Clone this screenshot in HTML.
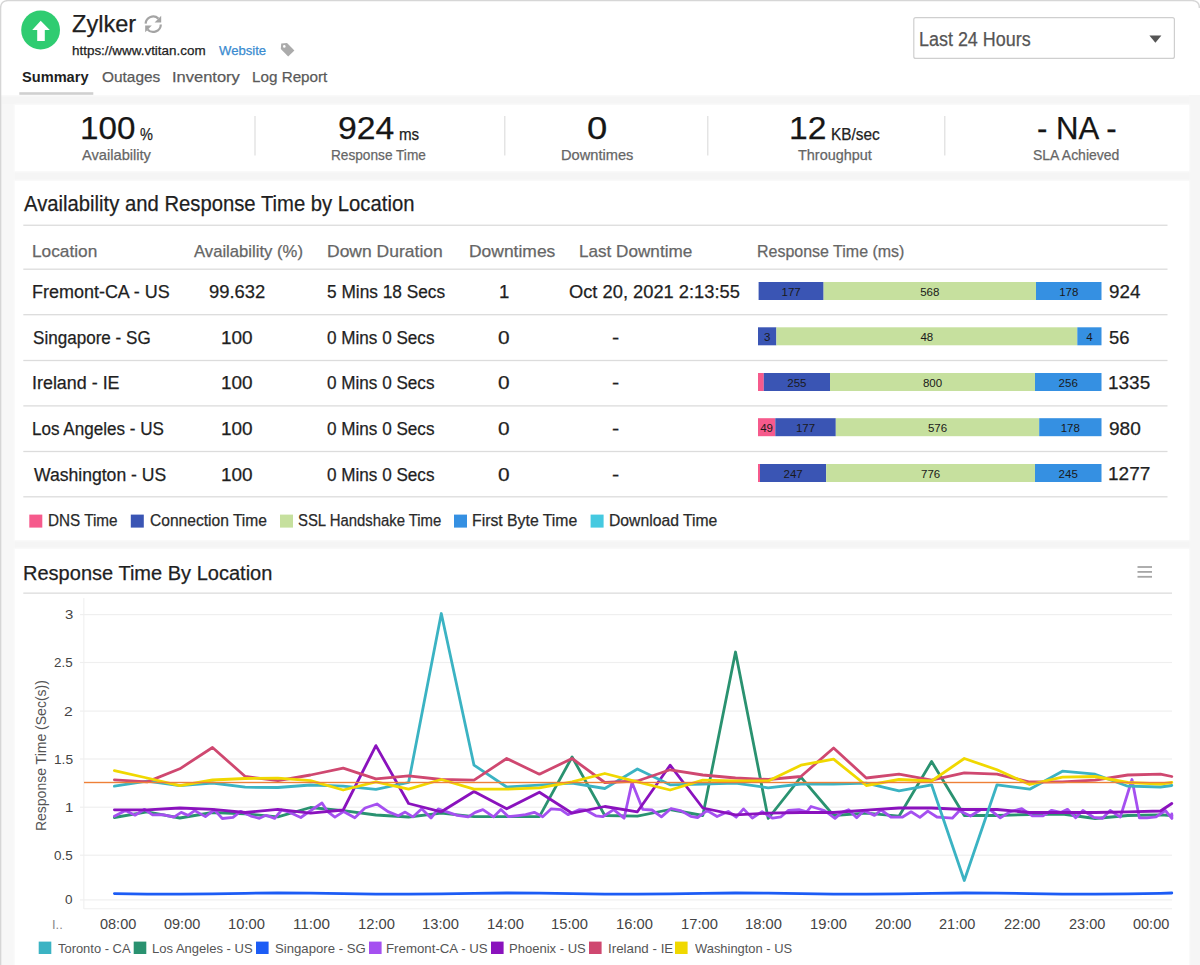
<!DOCTYPE html>
<html><head><meta charset="utf-8"><title>Zylker</title>
<style>
html,body{margin:0;padding:0;}
body{width:1200px;height:965px;overflow:hidden;position:relative;background:#f5f5f5;font-family:"Liberation Sans",sans-serif;}
.card{position:absolute;background:#fff;box-shadow:0 0 2px 1px rgba(255,255,255,0.6);}
.t{position:absolute;white-space:nowrap;line-height:1;transform-origin:0 0;-webkit-text-stroke:0.25px currentColor;}
svg{position:absolute;left:0;top:0;font-family:"Liberation Sans",sans-serif;}
</style></head><body>
<div class="card" style="left:0;top:0;width:1200px;height:95px;"></div>
<div style="position:absolute;left:1.6px;top:104px;width:13px;height:861px;background:#f7f7f7;"></div>
<div style="position:absolute;left:1188.5px;top:95px;width:11.5px;height:870px;background:#f6f6f6;"></div>
<div class="card" style="left:14.5px;top:104.5px;width:1174.5px;height:66.5px;"></div>
<div class="card" style="left:14.5px;top:181px;width:1174.5px;height:359px;"></div>
<div class="card" style="left:14.5px;top:548.5px;width:1174.5px;height:420px;"></div>
<svg width="1200" height="965" viewBox="0 0 1200 965">
<path d="M0.6,965 L0.6,8 Q0.6,0.6 8,0.6 L1192,0.6 Q1199.4,0.6 1199.4,8" fill="none" stroke="#d6d6d6" stroke-width="1.4"/>

<circle cx="40.6" cy="30" r="19.4" fill="#2fcc71"/>
<path d="M40.7,20.8 L49.8,30 L44.8,30 L44.8,41 L37.2,41 L37.2,30 L32.2,30 Z" fill="#fff"/>
<g fill="none" stroke="#a4a4a4" stroke-width="2.2"><path d="M145.6,23.6 A7.6,7.6 0 0 1 158.4,18.6"/><path d="M160.8,24.4 A7.6,7.6 0 0 1 147.6,29.4"/></g>
<path d="M161.2,15.8 L161.2,22.6 L154.6,22.6 Z" fill="#a4a4a4"/>
<path d="M145.2,32.2 L145.2,25.4 L151.8,25.4 Z" fill="#a4a4a4"/>
<path d="M281.2,43.6 L287,43 L294.4,50.4 L288.2,56.4 L280.8,49 Z" fill="#ababab"/>
<circle cx="284.3" cy="46.4" r="1.3" fill="#fff"/>
<rect x="19.3" y="92.2" width="74" height="2.6" fill="#d0d0d0"/>
<rect x="913.8" y="17.6" width="260.6" height="40.8" rx="2" fill="#fff" stroke="#cfcfcf" stroke-width="1.2"/>
<path d="M1149.4,35.6 L1161.4,35.6 L1155.4,42.8 Z" fill="#555"/>
<rect x="254.4" y="116" width="1.2" height="39.5" fill="#dedede"/>
<rect x="504.2" y="116" width="1.2" height="39.5" fill="#dedede"/>
<rect x="707.2" y="116" width="1.2" height="39.5" fill="#dedede"/>
<rect x="944.2" y="116" width="1.2" height="39.5" fill="#dedede"/>
<rect x="23.3" y="224.6" width="1144.2" height="1.3" fill="#dcdcdc"/>
<rect x="23.3" y="268.55" width="1144.2" height="1.3" fill="#dcdcdc"/>
<rect x="23.3" y="314.05" width="1144.2" height="1.3" fill="#dcdcdc"/>
<rect x="23.3" y="359.85" width="1144.2" height="1.3" fill="#dcdcdc"/>
<rect x="23.3" y="405.25" width="1144.2" height="1.3" fill="#dcdcdc"/>
<rect x="23.3" y="450.85" width="1144.2" height="1.3" fill="#dcdcdc"/>
<rect x="23.3" y="496.15" width="1144.2" height="1.3" fill="#dcdcdc"/>
<rect x="758.6" y="282.0" width="65.00" height="18.0" fill="#3a55b4"/>
<rect x="823.6" y="282.0" width="212.40" height="18.0" fill="#c6e09e"/>
<rect x="1036.0" y="282.0" width="65.50" height="18.0" fill="#3590e2"/>
<text x="791.1" y="295.6" font-size="11.5" fill="#1a1a1a" text-anchor="middle">177</text>
<text x="929.8" y="295.6" font-size="11.5" fill="#1a1a1a" text-anchor="middle">568</text>
<text x="1068.8" y="295.6" font-size="11.5" fill="#1a1a1a" text-anchor="middle">178</text>
<rect x="758.0" y="327.3" width="18.40" height="18.0" fill="#3a55b4"/>
<rect x="776.4" y="327.3" width="300.90" height="18.0" fill="#c6e09e"/>
<rect x="1077.3" y="327.3" width="24.20" height="18.0" fill="#3590e2"/>
<text x="767.2" y="340.9" font-size="11.5" fill="#1a1a1a" text-anchor="middle">3</text>
<text x="926.8" y="340.9" font-size="11.5" fill="#1a1a1a" text-anchor="middle">48</text>
<text x="1089.4" y="340.9" font-size="11.5" fill="#1a1a1a" text-anchor="middle">4</text>
<rect x="758.0" y="373.0" width="5.80" height="18.0" fill="#f65a8c"/>
<rect x="763.8" y="373.0" width="66.20" height="18.0" fill="#3a55b4"/>
<rect x="830.0" y="373.0" width="205.00" height="18.0" fill="#c6e09e"/>
<rect x="1035.0" y="373.0" width="66.50" height="18.0" fill="#3590e2"/>
<text x="796.9" y="386.6" font-size="11.5" fill="#1a1a1a" text-anchor="middle">255</text>
<text x="932.5" y="386.6" font-size="11.5" fill="#1a1a1a" text-anchor="middle">800</text>
<text x="1068.2" y="386.6" font-size="11.5" fill="#1a1a1a" text-anchor="middle">256</text>
<rect x="758.0" y="418.2" width="17.30" height="18.0" fill="#f65a8c"/>
<rect x="775.3" y="418.2" width="60.50" height="18.0" fill="#3a55b4"/>
<rect x="835.8" y="418.2" width="203.40" height="18.0" fill="#c6e09e"/>
<rect x="1039.2" y="418.2" width="62.30" height="18.0" fill="#3590e2"/>
<text x="766.6" y="431.8" font-size="11.5" fill="#1a1a1a" text-anchor="middle">49</text>
<text x="805.5" y="431.8" font-size="11.5" fill="#1a1a1a" text-anchor="middle">177</text>
<text x="937.5" y="431.8" font-size="11.5" fill="#1a1a1a" text-anchor="middle">576</text>
<text x="1070.3" y="431.8" font-size="11.5" fill="#1a1a1a" text-anchor="middle">178</text>
<rect x="758.0" y="464.0" width="2.00" height="18.0" fill="#f65a8c"/>
<rect x="760.0" y="464.0" width="66.20" height="18.0" fill="#3a55b4"/>
<rect x="826.2" y="464.0" width="208.80" height="18.0" fill="#c6e09e"/>
<rect x="1035.0" y="464.0" width="66.50" height="18.0" fill="#3590e2"/>
<text x="793.1" y="477.6" font-size="11.5" fill="#1a1a1a" text-anchor="middle">247</text>
<text x="930.6" y="477.6" font-size="11.5" fill="#1a1a1a" text-anchor="middle">776</text>
<text x="1068.2" y="477.6" font-size="11.5" fill="#1a1a1a" text-anchor="middle">245</text>
<rect x="29.3" y="514.6" width="13" height="13" fill="#f65a8c"/>
<rect x="130.8" y="514.6" width="13" height="13" fill="#3a55b4"/>
<rect x="280.0" y="514.6" width="13" height="13" fill="#c6e09e"/>
<rect x="454.0" y="514.6" width="13" height="13" fill="#3590e2"/>
<rect x="590.6" y="514.6" width="13" height="13" fill="#45c9e0"/>
<rect x="23.3" y="592.5" width="1148.7" height="1.3" fill="#dcdcdc"/>
<rect x="1137.5" y="566.1" width="14.5" height="1.8" fill="#a6a6a6"/>
<rect x="1137.5" y="571.0" width="14.5" height="1.8" fill="#a6a6a6"/>
<rect x="1137.5" y="575.9" width="14.5" height="1.8" fill="#a6a6a6"/>
<rect x="80" y="614.0" width="1092" height="1.2" fill="#efefef"/>
<rect x="80" y="661.9" width="1092" height="1.2" fill="#efefef"/>
<rect x="80" y="710.5" width="1092" height="1.2" fill="#efefef"/>
<rect x="80" y="758.4" width="1092" height="1.2" fill="#efefef"/>
<rect x="80" y="806.6" width="1092" height="1.2" fill="#efefef"/>
<rect x="80" y="854.6" width="1092" height="1.2" fill="#efefef"/>
<rect x="80" y="899.3" width="1092" height="1.2" fill="#efefef"/>
<rect x="83.3" y="598" width="1.1" height="311" fill="#efefef"/>
<rect x="84" y="908.2" width="1088" height="1.1" fill="#f0f0f0"/>
<g fill="none" stroke-width="2.8" stroke-linejoin="round" stroke-linecap="round">
<polyline stroke="#1c5cf5" points="114.4,893.6 147.1,894.1 179.8,894.2 212.5,893.9 245.2,893.3 277.9,893.0 310.5,893.1 343.2,893.6 375.9,894.1 408.6,894.2 441.3,893.8 474.0,893.3 506.7,893.0 539.4,893.1 572.1,893.6 604.8,894.1 637.4,894.2 670.1,893.8 702.8,893.3 735.5,893.0 768.2,893.1 800.9,893.6 833.6,894.1 866.3,894.2 899.0,893.8 931.6,893.3 964.3,893.0 997.0,893.2 1029.7,893.6 1062.4,894.1 1095.1,894.2 1127.8,893.8 1160.5,893.3 1171.8,893.0"/>
<polyline stroke="#2a9270" points="114.4,817.5 147.1,811.9 179.8,818.0 212.5,812.5 245.2,813.8 277.9,816.9 310.5,807.5 343.2,810.6 375.9,815.0 408.6,817.0 441.3,813.2 474.0,816.7 506.7,816.7 539.4,816.7 572.1,757.0 604.8,815.5 637.4,816.2 670.1,809.5 702.8,815.5 735.5,652.0 768.2,818.5 800.9,777.2 833.6,815.5 866.3,813.2 899.0,816.2 931.6,761.5 964.3,815.5 997.0,815.5 1029.7,814.5 1062.4,814.0 1095.1,818.5 1127.8,815.5 1160.5,814.8 1171.8,815.5"/>
<polyline stroke="#a550f0" points="114.4,816.3 125.5,810.6 135.0,815.2 144.6,809.3 152.6,814.9 162.6,814.7 173.9,817.1 181.2,812.4 188.0,815.3 194.7,810.6 205.4,816.6 214.4,809.9 222.3,818.5 233.0,817.3 240.6,811.3 250.9,816.1 259.4,818.3 265.9,815.3 274.7,818.4 281.6,810.0 289.4,812.2 300.8,817.5 308.5,812.1 322.0,803.0 327.7,811.7 334.9,817.1 343.5,811.6 354.8,817.7 365.0,808.0 377.0,804.0 388.0,811.6 398.3,815.8 405.2,812.1 412.9,816.9 421.7,808.7 431.0,818.0 438.3,808.9 446.1,811.7 457.3,815.3 468.2,816.9 475.2,812.3 482.9,809.7 493.5,816.9 500.9,809.6 508.5,816.7 518.1,815.6 525.6,814.6 534.3,812.3 542.7,816.8 551.0,808.9 560.8,809.7 568.0,814.6 579.0,809.7 585.6,810.0 595.8,815.8 602.7,816.7 613.7,809.6 624.1,818.2 632.0,782.5 642.7,809.3 652.0,810.0 661.4,816.9 671.1,808.5 681.3,810.9 690.7,816.3 697.6,817.5 707.1,810.6 717.1,816.5 728.2,811.5 736.2,817.2 743.5,808.9 752.3,818.1 762.1,811.7 772.6,818.2 781.0,816.8 788.2,810.5 799.0,809.7 806.8,811.8 811.0,806.5 824.4,810.5 835.0,818.4 841.9,812.4 848.6,809.7 856.7,817.7 863.9,810.7 874.5,815.4 881.2,810.0 890.9,817.1 902.2,817.2 911.1,811.8 919.9,817.4 927.8,811.1 936.9,817.0 945.3,817.7 952.3,818.2 959.4,810.7 970.5,816.0 981.4,809.3 990.2,809.9 1000.3,817.8 1010.4,811.6 1021.8,808.6 1032.3,815.8 1043.0,815.9 1051.7,810.3 1060.7,812.4 1067.5,809.3 1075.7,817.7 1082.9,810.4 1093.6,817.3 1102.6,818.3 1110.2,810.4 1120.3,817.1 1132.0,779.5 1139.4,817.9 1147.0,817.9 1156.1,816.8 1165.3,810.5 1171.9,818.4 1171.8,814.0"/>
<polyline stroke="#8a12bd" points="114.4,809.8 147.1,809.8 179.8,808.0 212.5,809.4 245.2,812.5 277.9,809.4 310.5,813.1 343.2,810.0 375.9,745.6 408.6,803.5 441.3,811.8 474.0,791.5 506.7,808.8 539.4,792.2 572.1,813.2 604.8,806.5 637.4,811.8 670.1,765.2 702.8,808.0 735.5,814.8 768.2,813.2 800.9,812.5 833.6,812.5 866.3,810.2 899.0,808.0 931.6,808.0 964.3,809.5 997.0,809.5 1029.7,812.5 1062.4,812.5 1095.1,812.5 1127.8,811.8 1160.5,811.0 1171.8,803.5"/>
<polyline stroke="#3bb3c3" points="114.4,786.2 147.1,781.2 179.8,785.6 212.5,783.0 245.2,787.2 277.9,787.5 310.5,785.0 343.2,786.2 375.9,789.4 408.6,782.5 441.3,613.5 474.0,765.2 506.7,787.0 539.4,785.2 572.1,783.2 604.8,788.5 637.4,769.0 670.1,784.8 702.8,784.0 735.5,783.2 768.2,787.8 800.9,784.0 833.6,784.0 866.3,783.2 899.0,790.8 931.6,784.8 964.3,880.5 997.0,784.8 1029.7,789.2 1062.4,771.2 1095.1,774.2 1127.8,786.2 1160.5,787.0 1171.8,785.5"/>
<polyline stroke="#cf4870" points="114.4,779.8 147.1,781.9 179.8,768.8 212.5,747.5 245.2,776.5 277.9,780.6 310.5,775.0 343.2,768.1 375.9,778.8 408.6,775.8 441.3,779.5 474.0,780.2 506.7,758.5 539.4,774.2 572.1,758.5 604.8,782.5 637.4,781.0 670.1,769.8 702.8,775.0 735.5,778.0 768.2,779.5 800.9,776.5 833.6,748.0 866.3,778.0 899.0,774.2 931.6,780.2 964.3,772.8 997.0,774.2 1029.7,782.0 1062.4,781.8 1095.1,780.2 1127.8,775.0 1160.5,774.2 1171.8,776.5"/>
<polyline stroke="#f0d800" points="114.4,770.6 147.1,778.0 179.8,785.6 212.5,780.0 245.2,778.5 277.9,778.1 310.5,780.6 343.2,790.0 375.9,781.9 408.6,789.2 441.3,779.5 474.0,789.2 506.7,789.2 539.4,787.8 572.1,781.8 604.8,773.5 637.4,781.8 670.1,790.0 702.8,780.2 735.5,781.0 768.2,781.0 800.9,765.2 833.6,759.2 866.3,785.5 899.0,779.5 931.6,781.0 964.3,758.5 997.0,769.8 1029.7,784.5 1062.4,777.2 1095.1,776.5 1127.8,782.5 1160.5,784.0 1171.8,782.5"/>
</g>
<rect x="84" y="781.8" width="1088" height="1.4" fill="#ee8038"/>
<text x="0" y="0" font-size="14.0" fill="#555" text-anchor="middle" transform="translate(46,755.6) rotate(-90)">Response Time (Sec(s))</text>
<rect x="38.7" y="941.6" width="12.6" height="12.4" fill="#3bb3c3"/>
<rect x="133.7" y="941.6" width="12.6" height="12.4" fill="#2a9270"/>
<rect x="256.0" y="941.6" width="12.6" height="12.4" fill="#1c5cf5"/>
<rect x="369.0" y="941.6" width="12.6" height="12.4" fill="#a550f0"/>
<rect x="491.0" y="941.6" width="12.6" height="12.4" fill="#8a12bd"/>
<rect x="589.0" y="941.6" width="12.6" height="12.4" fill="#cf4870"/>
<rect x="675.0" y="941.6" width="12.6" height="12.4" fill="#f0d800"/>
</svg>
<span class="t" style="left:72.19px;top:11.88px;font-size:24.0px;color:#1f1f1f;transform:scaleX(0.9810);">Zylker</span>
<span class="t" style="left:72.06px;top:43.74px;font-size:13.3px;color:#222;transform:scaleX(1.0102);">https://www.vtitan.com</span>
<span class="t" style="left:219.40px;top:43.74px;font-size:13.3px;color:#3a8bd0;transform:scaleX(0.9870);">Website</span>
<span class="t" style="left:22.26px;top:69.18px;font-size:15.5px;color:#1e1e1e;font-weight:700;transform:scaleX(0.9420);-webkit-text-stroke:0;">Summary</span>
<span class="t" style="left:102.13px;top:69.28px;font-size:15.5px;color:#5a5a5a;transform:scaleX(0.9948);">Outages</span>
<span class="t" style="left:171.82px;top:69.28px;font-size:15.5px;color:#5a5a5a;transform:scaleX(1.0640);">Inventory</span>
<span class="t" style="left:252.28px;top:69.28px;font-size:15.5px;color:#5a5a5a;transform:scaleX(0.9823);">Log Report</span>
<span class="t" style="left:918.76px;top:29.27px;font-size:20.0px;color:#555;transform:scaleX(0.8969);">Last 24 Hours</span>
<span class="t" style="left:80.25px;top:113.13px;font-size:31.5px;color:#161616;transform:scaleX(1.0527);">100</span>
<span class="t" style="left:140.26px;top:126.00px;font-size:16.3px;color:#222;transform:scaleX(0.8903);">%</span>
<span class="t" style="left:82.00px;top:147.30px;font-size:15.0px;color:#666;transform:scaleX(0.9766);">Availability</span>
<span class="t" style="left:337.51px;top:113.13px;font-size:31.5px;color:#161616;transform:scaleX(1.0702);">924</span>
<span class="t" style="left:398.74px;top:126.00px;font-size:16.3px;color:#222;transform:scaleX(0.9303);">ms</span>
<span class="t" style="left:331.11px;top:147.30px;font-size:15.0px;color:#666;transform:scaleX(0.9101);">Response Time</span>
<span class="t" style="left:587.34px;top:113.13px;font-size:31.5px;color:#161616;transform:scaleX(1.1574);">0</span>
<span class="t" style="left:560.63px;top:147.30px;font-size:15.0px;color:#666;transform:scaleX(0.9758);">Downtimes</span>
<span class="t" style="left:788.81px;top:113.13px;font-size:31.5px;color:#161616;transform:scaleX(1.0678);">12</span>
<span class="t" style="left:830.57px;top:126.00px;font-size:16.3px;color:#222;transform:scaleX(0.9463);">KB/sec</span>
<span class="t" style="left:797.51px;top:147.30px;font-size:15.0px;color:#666;transform:scaleX(0.9627);">Throughput</span>
<span class="t" style="left:1037.05px;top:113.13px;font-size:31.5px;color:#161616;transform:scaleX(0.9897);">- NA -</span>
<span class="t" style="left:1033.30px;top:147.30px;font-size:15.0px;color:#666;transform:scaleX(0.9329);">SLA Achieved</span>
<span class="t" style="left:23.50px;top:192.87px;font-size:22.0px;color:#1f1f1f;transform:scaleX(0.9209);">Availability and Response Time by Location</span>
<span class="t" style="left:32.32px;top:242.81px;font-size:17.0px;color:#666;transform:scaleX(1.0160);">Location</span>
<span class="t" style="left:193.60px;top:242.81px;font-size:17.0px;color:#666;transform:scaleX(0.9804);">Availability (%)</span>
<span class="t" style="left:326.50px;top:242.81px;font-size:17.0px;color:#666;transform:scaleX(1.0292);">Down Duration</span>
<span class="t" style="left:469.10px;top:242.81px;font-size:17.0px;color:#666;transform:scaleX(1.0267);">Downtimes</span>
<span class="t" style="left:578.53px;top:242.81px;font-size:17.0px;color:#666;transform:scaleX(1.0070);">Last Downtime</span>
<span class="t" style="left:757.32px;top:242.81px;font-size:17.0px;color:#666;transform:scaleX(0.9400);">Response Time (ms)</span>
<span class="t" style="left:32.26px;top:283.06px;font-size:18.0px;color:#1f1f1f;transform:scaleX(0.9984);">Fremont-CA - US</span>
<span class="t" style="left:208.68px;top:283.06px;font-size:18.0px;color:#1f1f1f;transform:scaleX(1.0210);">99.632</span>
<span class="t" style="left:327.21px;top:283.06px;font-size:18.0px;color:#1f1f1f;transform:scaleX(0.9599);">5 Mins 18 Secs</span>
<span class="t" style="left:499.01px;top:283.06px;font-size:18.0px;color:#1f1f1f;transform:scaleX(1.0336);">1</span>
<span class="t" style="left:569.29px;top:283.06px;font-size:18.0px;color:#1f1f1f;transform:scaleX(1.0162);">Oct 20, 2021 2:13:55</span>
<span class="t" style="left:32.85px;top:328.96px;font-size:18.0px;color:#1f1f1f;transform:scaleX(0.9484);">Singapore - SG</span>
<span class="t" style="left:221.18px;top:328.96px;font-size:18.0px;color:#1f1f1f;transform:scaleX(1.0538);">100</span>
<span class="t" style="left:327.22px;top:328.96px;font-size:18.0px;color:#1f1f1f;transform:scaleX(0.9507);">0 Mins 0 Secs</span>
<span class="t" style="left:498.37px;top:328.96px;font-size:18.0px;color:#1f1f1f;transform:scaleX(1.1574);">0</span>
<span class="t" style="left:612.34px;top:328.96px;font-size:18.0px;color:#1f1f1f;transform:scaleX(1.2000);">-</span>
<span class="t" style="left:32.09px;top:374.26px;font-size:18.0px;color:#1f1f1f;transform:scaleX(0.9944);">Ireland - IE</span>
<span class="t" style="left:221.18px;top:374.26px;font-size:18.0px;color:#1f1f1f;transform:scaleX(1.0538);">100</span>
<span class="t" style="left:327.22px;top:374.26px;font-size:18.0px;color:#1f1f1f;transform:scaleX(0.9507);">0 Mins 0 Secs</span>
<span class="t" style="left:498.37px;top:374.26px;font-size:18.0px;color:#1f1f1f;transform:scaleX(1.1574);">0</span>
<span class="t" style="left:612.34px;top:374.26px;font-size:18.0px;color:#1f1f1f;transform:scaleX(1.2000);">-</span>
<span class="t" style="left:32.33px;top:420.16px;font-size:18.0px;color:#1f1f1f;transform:scaleX(0.9481);">Los Angeles - US</span>
<span class="t" style="left:221.18px;top:420.16px;font-size:18.0px;color:#1f1f1f;transform:scaleX(1.0538);">100</span>
<span class="t" style="left:327.22px;top:420.16px;font-size:18.0px;color:#1f1f1f;transform:scaleX(0.9507);">0 Mins 0 Secs</span>
<span class="t" style="left:498.37px;top:420.16px;font-size:18.0px;color:#1f1f1f;transform:scaleX(1.1574);">0</span>
<span class="t" style="left:612.34px;top:420.16px;font-size:18.0px;color:#1f1f1f;transform:scaleX(1.2000);">-</span>
<span class="t" style="left:33.70px;top:465.76px;font-size:18.0px;color:#1f1f1f;transform:scaleX(0.9765);">Washington - US</span>
<span class="t" style="left:221.18px;top:465.76px;font-size:18.0px;color:#1f1f1f;transform:scaleX(1.0538);">100</span>
<span class="t" style="left:327.22px;top:465.76px;font-size:18.0px;color:#1f1f1f;transform:scaleX(0.9507);">0 Mins 0 Secs</span>
<span class="t" style="left:498.37px;top:465.76px;font-size:18.0px;color:#1f1f1f;transform:scaleX(1.1574);">0</span>
<span class="t" style="left:612.34px;top:465.76px;font-size:18.0px;color:#1f1f1f;transform:scaleX(1.2000);">-</span>
<span class="t" style="left:1108.56px;top:282.64px;font-size:18.5px;color:#1f1f1f;transform:scaleX(1.0165);">924</span>
<span class="t" style="left:1108.76px;top:328.54px;font-size:18.5px;color:#1f1f1f;transform:scaleX(0.9971);">56</span>
<span class="t" style="left:1107.98px;top:373.84px;font-size:18.5px;color:#1f1f1f;transform:scaleX(1.0247);">1335</span>
<span class="t" style="left:1108.55px;top:419.74px;font-size:18.5px;color:#1f1f1f;transform:scaleX(1.0298);">980</span>
<span class="t" style="left:1107.98px;top:465.34px;font-size:18.5px;color:#1f1f1f;transform:scaleX(1.0296);">1277</span>
<span class="t" style="left:47.98px;top:513.45px;font-size:16.0px;color:#2a2a2a;transform:scaleX(0.9537);">DNS Time</span>
<span class="t" style="left:149.92px;top:513.45px;font-size:16.0px;color:#2a2a2a;transform:scaleX(0.9742);">Connection Time</span>
<span class="t" style="left:298.01px;top:513.45px;font-size:16.0px;color:#2a2a2a;transform:scaleX(0.9293);">SSL Handshake Time</span>
<span class="t" style="left:472.49px;top:513.45px;font-size:16.0px;color:#2a2a2a;transform:scaleX(0.9867);">First Byte Time</span>
<span class="t" style="left:609.34px;top:513.45px;font-size:16.0px;color:#2a2a2a;transform:scaleX(0.9823);">Download Time</span>
<span class="t" style="left:22.65px;top:562.67px;font-size:20.0px;color:#1f1f1f;transform:scaleX(1.0014);">Response Time By Location</span>
<span class="t" style="left:64.80px;top:608.12px;font-size:13.2px;color:#444;transform:scaleX(1.1283);-webkit-text-stroke:0;">3</span>
<span class="t" style="left:54.33px;top:656.02px;font-size:13.2px;color:#444;transform:scaleX(1.0140);-webkit-text-stroke:0;">2.5</span>
<span class="t" style="left:64.42px;top:704.62px;font-size:13.2px;color:#444;transform:scaleX(1.1858);-webkit-text-stroke:0;">2</span>
<span class="t" style="left:53.90px;top:752.52px;font-size:13.2px;color:#444;transform:scaleX(1.0379);-webkit-text-stroke:0;">1.5</span>
<span class="t" style="left:64.81px;top:800.72px;font-size:13.2px;color:#444;transform:scaleX(1.1276);-webkit-text-stroke:0;">1</span>
<span class="t" style="left:54.26px;top:848.72px;font-size:13.2px;color:#444;transform:scaleX(1.0178);-webkit-text-stroke:0;">0.5</span>
<span class="t" style="left:65.36px;top:893.42px;font-size:13.2px;color:#444;transform:scaleX(1.0259);-webkit-text-stroke:0;">0</span>
<span class="t" style="left:99.82px;top:917.15px;font-size:14.0px;color:#444;transform:scaleX(1.0347);-webkit-text-stroke:0;">08:00</span>
<span class="t" style="left:164.41px;top:917.15px;font-size:14.0px;color:#444;transform:scaleX(1.0347);-webkit-text-stroke:0;">09:00</span>
<span class="t" style="left:228.40px;top:917.15px;font-size:14.0px;color:#444;transform:scaleX(1.0520);-webkit-text-stroke:0;">10:00</span>
<span class="t" style="left:292.95px;top:917.15px;font-size:14.0px;color:#444;transform:scaleX(1.0884);-webkit-text-stroke:0;">11:00</span>
<span class="t" style="left:357.58px;top:917.15px;font-size:14.0px;color:#444;transform:scaleX(1.0520);-webkit-text-stroke:0;">12:00</span>
<span class="t" style="left:422.17px;top:917.15px;font-size:14.0px;color:#444;transform:scaleX(1.0520);-webkit-text-stroke:0;">13:00</span>
<span class="t" style="left:486.76px;top:917.15px;font-size:14.0px;color:#444;transform:scaleX(1.0520);-webkit-text-stroke:0;">14:00</span>
<span class="t" style="left:551.35px;top:917.15px;font-size:14.0px;color:#444;transform:scaleX(1.0520);-webkit-text-stroke:0;">15:00</span>
<span class="t" style="left:615.94px;top:917.15px;font-size:14.0px;color:#444;transform:scaleX(1.0520);-webkit-text-stroke:0;">16:00</span>
<span class="t" style="left:680.53px;top:917.15px;font-size:14.0px;color:#444;transform:scaleX(1.0520);-webkit-text-stroke:0;">17:00</span>
<span class="t" style="left:745.12px;top:917.15px;font-size:14.0px;color:#444;transform:scaleX(1.0520);-webkit-text-stroke:0;">18:00</span>
<span class="t" style="left:809.71px;top:917.15px;font-size:14.0px;color:#444;transform:scaleX(1.0520);-webkit-text-stroke:0;">19:00</span>
<span class="t" style="left:874.75px;top:917.15px;font-size:14.0px;color:#444;transform:scaleX(1.0390);-webkit-text-stroke:0;">20:00</span>
<span class="t" style="left:939.34px;top:917.15px;font-size:14.0px;color:#444;transform:scaleX(1.0390);-webkit-text-stroke:0;">21:00</span>
<span class="t" style="left:1003.93px;top:917.15px;font-size:14.0px;color:#444;transform:scaleX(1.0390);-webkit-text-stroke:0;">22:00</span>
<span class="t" style="left:1068.52px;top:917.15px;font-size:14.0px;color:#444;transform:scaleX(1.0390);-webkit-text-stroke:0;">23:00</span>
<span class="t" style="left:1133.26px;top:917.15px;font-size:14.0px;color:#444;transform:scaleX(1.0347);-webkit-text-stroke:0;">00:00</span>
<span class="t" style="left:52.34px;top:917.77px;font-size:13.5px;color:#888;transform:scaleX(0.9540);-webkit-text-stroke:0;">I..</span>
<span class="t" style="left:58.24px;top:941.57px;font-size:13.5px;color:#555;transform:scaleX(0.9567);-webkit-text-stroke:0;">Toronto - CA</span>
<span class="t" style="left:152.46px;top:941.57px;font-size:13.5px;color:#555;transform:scaleX(0.9649);-webkit-text-stroke:0;">Los Angeles - US</span>
<span class="t" style="left:275.34px;top:941.57px;font-size:13.5px;color:#555;transform:scaleX(0.9752);-webkit-text-stroke:0;">Singapore - SG</span>
<span class="t" style="left:386.44px;top:941.57px;font-size:13.5px;color:#555;transform:scaleX(0.9824);-webkit-text-stroke:0;">Fremont-CA - US</span>
<span class="t" style="left:508.96px;top:941.57px;font-size:13.5px;color:#555;transform:scaleX(0.9645);-webkit-text-stroke:0;">Phoenix - US</span>
<span class="t" style="left:607.80px;top:941.57px;font-size:13.5px;color:#555;transform:scaleX(0.9882);-webkit-text-stroke:0;">Ireland - IE</span>
<span class="t" style="left:695.00px;top:941.57px;font-size:13.5px;color:#555;transform:scaleX(0.9569);-webkit-text-stroke:0;">Washington - US</span>
</body></html>
